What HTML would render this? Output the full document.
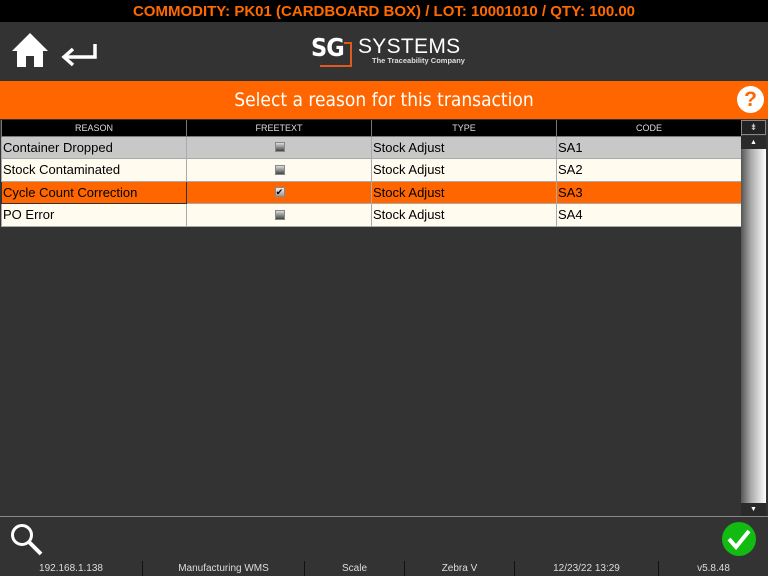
<!DOCTYPE html>
<html><head><meta charset="utf-8"><style>
*{margin:0;padding:0;box-sizing:border-box}
body{width:768px;height:576px;background:#333;position:relative;overflow:hidden;font-family:"Liberation Sans",sans-serif}
.top{position:absolute;left:0;top:0;width:768px;height:22px;background:#000;color:#ff6a00;font-weight:bold;font-size:15px;text-align:center;line-height:23px;letter-spacing:0px}
.hdr{position:absolute;left:0;top:22px;width:768px;height:59px;background:#333}
.bar{position:absolute;left:0;top:81px;width:768px;height:38px;background:#ff6600;color:#fff;font-size:19px;text-align:center;line-height:38px;font-family:"DejaVu Sans Condensed","Liberation Sans",sans-serif}
.help{position:absolute;left:737px;top:86px;width:27px;height:27px;border-radius:50%;background:#fff;color:#ff6600;font-weight:bold;font-size:21px;text-align:center;line-height:27px}
table{position:absolute;left:1px;top:120px;width:740px;border-collapse:collapse;table-layout:fixed}
th{background:#000;color:#ddd;font-weight:normal;font-size:9px;height:16px;border:1px solid #777;border-top:none}
td{height:22.5px;font-size:13px;color:#000;border:1px solid #aaa;padding-left:1px;white-space:nowrap}
.r1 td{background:#c8c8c8}.r2 td{background:#fffbee}.r3 td{background:#ff6600}
.cb{display:block;margin:0 auto;width:10px;height:10px;background:linear-gradient(#ddd,#444);border:1px solid #888}
.sb{position:absolute;left:741px;top:136px;width:25px;height:380px;background:linear-gradient(90deg,#555,#aaa 40%,#fff)}
.btn{position:absolute;left:741px;width:25px;height:13px;background:#2a2a2a;color:#fff;font-size:7px;text-align:center;line-height:13px}
.line{position:absolute;left:0;top:516px;width:768px;height:1px;background:#888}
.st{position:absolute;top:561px;height:15px;background:#333;color:#ddd;font-size:10px;text-align:center;line-height:15px;border-left:1px solid #111}
</style></head><body>
<div class="top">COMMODITY: PK01 (CARDBOARD BOX) / LOT: 10001010 / QTY: 100.00</div>
<div class="hdr"></div>
<svg style="position:absolute;left:0;top:22px" width="110" height="59">
<path d="M30 11 L48 29 L43 29 L43 45 L34 45 L34 34 L26 34 L26 45 L17 45 L17 29 L12 29 Z" fill="#fff"/>
<path d="M95 22 V35 H66" stroke="#fff" stroke-width="3.5" fill="none"/>
<path d="M73 27 L64 35 L73 43" stroke="#fff" stroke-width="3.5" fill="none"/>
</svg>
<div style="position:absolute;left:311px;top:33px;color:#fff;font-weight:bold;font-size:25px;font-family:'DejaVu Sans Condensed',sans-serif;letter-spacing:-1px">SG</div>
<svg style="position:absolute;left:318px;top:40px" width="40" height="30"><path d="M26 3 H33 V26 H2" stroke="#e05a20" stroke-width="2" fill="none"/></svg>
<div style="position:absolute;left:358px;top:35px;color:#fff;font-size:21px;letter-spacing:0.3px">SYSTEMS</div>
<div style="position:absolute;left:372px;top:56px;color:#ddd;font-size:7.5px;font-weight:bold">The Traceability Company</div>
<div class="bar">Select a reason for this transaction</div>
<div class="help">?</div>
<table>
<colgroup><col style="width:185px"><col style="width:185px"><col style="width:185px"><col style="width:185px"></colgroup>
<tr><th>REASON</th><th>FREETEXT</th><th>TYPE</th><th>CODE</th></tr>
<tr class="r1"><td>Container Dropped</td><td><span class="cb"></span></td><td>Stock Adjust</td><td>SA1</td></tr>
<tr class="r2"><td>Stock Contaminated</td><td><span class="cb"></span></td><td>Stock Adjust</td><td>SA2</td></tr>
<tr class="r3"><td style="border:1px solid #333">Cycle Count Correction</td><td><span class="cb" style="background:linear-gradient(#eee,#999);font-size:9px;line-height:8px;text-align:center">✔</span></td><td>Stock Adjust</td><td>SA3</td></tr>
<tr class="r2"><td>PO Error</td><td><span class="cb"></span></td><td>Stock Adjust</td><td>SA4</td></tr>
</table>
<div style="position:absolute;left:741px;top:120px;width:25px;height:15px;background:#222;border:1px solid #888;color:#ddd;font-size:9px;text-align:center;line-height:13px">⇟</div>
<div class="sb"></div>
<div class="btn" style="top:136px">▲</div>
<div class="btn" style="top:503px">▼</div>
<div class="line"></div>
<svg style="position:absolute;left:8px;top:521px" width="36" height="36"><circle cx="14" cy="14" r="9.5" stroke="#fff" stroke-width="3" fill="none"/><path d="M21 21 L33 33" stroke="#fff" stroke-width="4"/></svg>
<svg style="position:absolute;left:721px;top:521px" width="36" height="36"><circle cx="18" cy="18" r="17" fill="#11bb11"/><path d="M8 18 L15 26 L28 10" stroke="#fff" stroke-width="4" fill="none"/></svg>
<div class="st" style="left:0;width:142px;border:none">192.168.1.138</div>
<div class="st" style="left:142px;width:162px">Manufacturing WMS</div>
<div class="st" style="left:304px;width:100px">Scale</div>
<div class="st" style="left:404px;width:110px">Zebra V</div>
<div class="st" style="left:514px;width:144px">12/23/22 13:29</div>
<div class="st" style="left:658px;width:110px">v5.8.48</div>
</body></html>
